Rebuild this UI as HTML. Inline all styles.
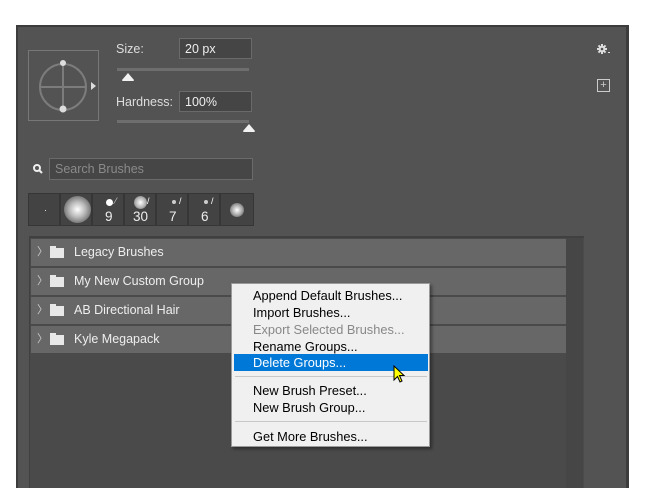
<html><head><style>
html,body{margin:0;width:647px;height:488px;overflow:hidden}
body{background:#fff;position:relative;font-family:"Liberation Sans",Arial,sans-serif;font-size:12.5px;color:#ddd}
div{position:absolute;box-sizing:border-box}
.panel{left:16px;top:25px;width:613px;height:463px;background:#535353;border:2px solid #3c3c3c;border-right-width:3px;border-bottom:0}
.inp{background:#454545;border:1px solid #6a6a6a;color:#eee;padding:1px 5px;height:21px;line-height:18px}
.slider{height:3px;background:#6e6e6e}
.row{left:31px;width:535px;height:27px;background:#676767;line-height:27px;color:#eee;padding-left:43px}
.row .ch{position:absolute;left:6px;top:0;color:#ccc;font-size:11px}
.row .fd{position:absolute;left:19px;top:9px;width:14px;height:10px;background:#e8e8e8}
.row .fd:before{content:"";position:absolute;left:0;top:-2px;width:6px;height:2px;background:#e8e8e8}
.tile{top:193px;width:32px;height:33px;background:#434343;border:1px solid #363636;color:#eee;font-size:13.5px}
.menu{left:231px;top:283px;width:199px;height:164px;background:#f0f0f0;border:1px solid #9a9a9a;box-shadow:2px 2px 3px rgba(0,0,0,.4);color:#000;font-size:12.8px}
.mi{left:21px;height:17px;line-height:17px}
.sep{left:3px;width:192px;height:1px;background:#c8c8c8}
</style></head><body>
<div class="panel"></div>
<div style="left:28px;top:50px;width:71px;height:71px;border:1px solid #777"></div>
<svg style="position:absolute;left:28px;top:50px" width="71" height="71"><circle cx="35" cy="37" r="23" fill="none" stroke="#7c7c7c" stroke-width="2"/><line x1="12" y1="37" x2="58" y2="37" stroke="#7c7c7c" stroke-width="2"/><line x1="35" y1="13" x2="35" y2="60" stroke="#7c7c7c" stroke-width="2"/><circle cx="35" cy="13" r="3" fill="#ddd"/><circle cx="35" cy="59" r="3.5" fill="#ddd"/><path d="M63 32 L68 36 L63 40Z" fill="#ddd"/></svg>
<div style="left:116px;top:42px;color:#ddd">Size:</div>
<div class="inp" style="left:179px;top:38px;width:73px">20 px</div>
<div class="slider" style="left:117px;top:68px;width:132px"></div>
<svg style="position:absolute;left:121px;top:72px" width="14" height="10"><path d="M7 1 L13 8 Q13 9 12 9 L2 9 Q1 9 1 8Z" fill="#f2f2f2"/></svg>
<div style="left:116px;top:95px">Hardness:</div>
<div class="inp" style="left:179px;top:91px;width:73px">100%</div>
<div class="slider" style="left:117px;top:120px;width:132px"></div>
<svg style="position:absolute;left:242px;top:123px" width="14" height="10"><path d="M7 1 L13 8 Q13 9 12 9 L2 9 Q1 9 1 8Z" fill="#f2f2f2"/></svg>
<svg style="position:absolute;left:32px;top:163px" width="12" height="12"><circle cx="5" cy="5" r="3" fill="none" stroke="#eee" stroke-width="2"/><line x1="7" y1="7" x2="10" y2="10" stroke="#eee" stroke-width="2"/></svg>
<div class="inp" style="left:49px;top:158px;width:204px;height:22px;color:#8a8a8a;background:#464646;border-color:#6a6a6a">Search Brushes</div>
<div class="tile" style="left:28px"><span style="position:absolute;left:16px;top:16px;width:1px;height:1px;background:#ddd"></span></div>
<div class="tile" style="left:60px;background:#434343"><span style="position:absolute;left:3px;top:2px;width:27px;height:27px;border-radius:50%;background:radial-gradient(#fff,#bbb 40%,#666 80%,transparent 100%)"></span></div>
<div class="tile" style="left:92px"><span style="position:absolute;left:13px;top:5px;width:7px;height:7px;border-radius:50%;background:#fff"></span><span style="position:absolute;left:22px;top:2px;color:#ccc;font-size:9px">⁄</span><span style="position:absolute;left:12px;top:15px">9</span></div>
<div class="tile" style="left:124px"><span style="position:absolute;left:9px;top:2px;width:13px;height:13px;border-radius:50%;background:radial-gradient(#fff,#aaa 60%,transparent)"></span><span style="position:absolute;left:22px;top:2px;color:#fff;font-size:9px">/</span><span style="position:absolute;left:8px;top:15px">30</span></div>
<div class="tile" style="left:156px"><span style="position:absolute;left:15px;top:6px;width:4px;height:4px;border-radius:50%;background:#ccc"></span><span style="position:absolute;left:22px;top:2px;color:#fff;font-size:9px">/</span><span style="position:absolute;left:12px;top:15px">7</span></div>
<div class="tile" style="left:188px"><span style="position:absolute;left:15px;top:6px;width:4px;height:4px;border-radius:50%;background:#ccc"></span><span style="position:absolute;left:22px;top:2px;color:#fff;font-size:9px">/</span><span style="position:absolute;left:12px;top:15px">6</span></div>
<div class="tile" style="left:220px;width:34px"><span style="position:absolute;left:9px;top:9px;width:14px;height:14px;border-radius:50%;background:radial-gradient(#fff,#aaa 50%,transparent)"></span></div>
<svg style="position:absolute;left:597px;top:44px" width="16" height="12"><g fill="#ddd"><circle cx="5" cy="5" r="3.3"/><rect x="4" y="0" width="2" height="10"/><rect x="0" y="4" width="10" height="2"/><rect x="4" y="0" width="2" height="10" transform="rotate(45 5 5)"/><rect x="4" y="0" width="2" height="10" transform="rotate(-45 5 5)"/></g><circle cx="5" cy="5" r="1.3" fill="#535353"/><rect x="11" y="8" width="2" height="1" fill="#ddd"/></svg>
<div style="left:597px;top:79px;width:13px;height:13px;border:1px solid #ccc;color:#ccc;font-size:11px;line-height:10px;text-align:center">+</div>
<div style="left:29px;top:236px;width:555px;height:252px;background:#4a4a4a;border-top:2px solid #404040;border-left:1px solid #404040"></div>
<div style="left:566px;top:238px;width:17px;height:250px;background:#464646"></div>
<div class="row" style="top:239px"><span class="ch">〉</span><span class="fd"></span>Legacy Brushes</div>
<div class="row" style="top:268px"><span class="ch">〉</span><span class="fd"></span>My New Custom Group</div>
<div class="row" style="top:297px"><span class="ch">〉</span><span class="fd"></span>AB Directional Hair</div>
<div class="row" style="top:326px"><span class="ch">〉</span><span class="fd"></span>Kyle Megapack</div>
<div class="menu">
<div class="mi" style="top:3px">Append Default Brushes...</div>
<div class="mi" style="top:20px">Import Brushes...</div>
<div class="mi" style="top:37px;color:#888">Export Selected Brushes...</div>
<div class="mi" style="top:54px">Rename Groups...</div>
<div style="left:2px;top:70px;width:194px;height:17px;background:#0078d7"></div>
<div class="mi" style="top:70px;color:#fff">Delete Groups...</div>
<div class="sep" style="top:92px"></div>
<div class="mi" style="top:98px">New Brush Preset...</div>
<div class="mi" style="top:115px">New Brush Group...</div>
<div class="sep" style="top:137px"></div>
<div class="mi" style="top:144px">Get More Brushes...</div>
</div>
<svg style="position:absolute;left:393px;top:365px" width="14" height="20"><path d="M1 1 L1 15 L4.5 11.5 L7 17 L9 16 L6.5 10.5 L11 10.5Z" fill="#ffff00" stroke="#000" stroke-width="1"/></svg>
</body></html>
